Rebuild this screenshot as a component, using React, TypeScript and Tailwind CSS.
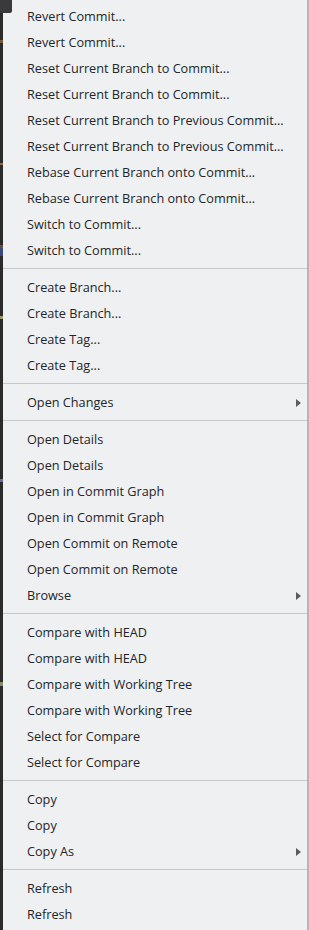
import React from "react";

type Item = { label: string; sub?: boolean } | "sep";

const items: Item[] = [
  { label: "Revert Commit..." },
  { label: "Revert Commit..." },
  { label: "Reset Current Branch to Commit..." },
  { label: "Reset Current Branch to Commit..." },
  { label: "Reset Current Branch to Previous Commit..." },
  { label: "Reset Current Branch to Previous Commit..." },
  { label: "Rebase Current Branch onto Commit..." },
  { label: "Rebase Current Branch onto Commit..." },
  { label: "Switch to Commit..." },
  { label: "Switch to Commit..." },
  "sep",
  { label: "Create Branch..." },
  { label: "Create Branch..." },
  { label: "Create Tag..." },
  { label: "Create Tag..." },
  "sep",
  { label: "Open Changes", sub: true },
  "sep",
  { label: "Open Details" },
  { label: "Open Details" },
  { label: "Open in Commit Graph" },
  { label: "Open in Commit Graph" },
  { label: "Open Commit on Remote" },
  { label: "Open Commit on Remote" },
  { label: "Browse", sub: true },
  "sep",
  { label: "Compare with HEAD" },
  { label: "Compare with HEAD" },
  { label: "Compare with Working Tree" },
  { label: "Compare with Working Tree" },
  { label: "Select for Compare" },
  { label: "Select for Compare" },
  "sep",
  { label: "Copy" },
  { label: "Copy" },
  { label: "Copy As", sub: true },
  "sep",
  { label: "Refresh" },
  { label: "Refresh" },
];

export default function App() {
  return (
    <div
      className="relative flex w-[309px] h-[930px] bg-[#eff0f1] overflow-hidden"
      style={{ fontFamily: '"Open Sans", "Noto Sans", sans-serif' }}
    >
      <div className="w-[3px] h-full bg-[#2a2a2a] flex flex-col">
        <div className="h-[40px]" />
        <div className="h-[3px] bg-[#7a5a3a]" />
        <div className="h-[120px]" />
        <div className="h-[2px] bg-[#8a6a4a]" />
        <div className="h-[80px]" />
        <div className="h-[3px] bg-[#6a4a3a]" />
        <div className="h-[8px] bg-[#3a4a7a]" />
        <div className="h-[60px]" />
        <div className="h-[3px] bg-[#9a9a6a]" />
        <div className="h-[160px]" />
        <div className="h-[3px] bg-[#6a6a9a]" />
        <div className="h-[200px]" />
        <div className="h-[4px] bg-[#8a8a6a]" />
      </div>
      <div className="absolute left-0 top-0 w-[12px] h-[13px] bg-[#3a3a3a] rounded-br-[2px]" />
      <div className="flex-1 flex flex-col pt-[4px]">
        {items.map((it, i) =>
          it === "sep" ? (
            <div key={i} className="h-[11px] flex flex-col pt-[4px]">
              <div className="h-px bg-[#c5c7c9]" />
            </div>
          ) : (
            <div
              key={i}
              className="h-[26px] flex items-center pl-[24px] pr-[8px] text-[12.7px] text-[#232629] relative"
            >
              <span>{it.label}</span>
              {it.sub && (
                <svg
                  className="absolute right-[6px] top-[9px]"
                  width="5"
                  height="8"
                  viewBox="0 0 5 8"
                >
                  <path d="M0 0 L5 4 L0 8 Z" fill="#5a5d60" />
                </svg>
              )}
            </div>
          )
        )}
      </div>
      <div className="w-[2px] h-full bg-[#b4b7ba]" />
    </div>
  );
}
